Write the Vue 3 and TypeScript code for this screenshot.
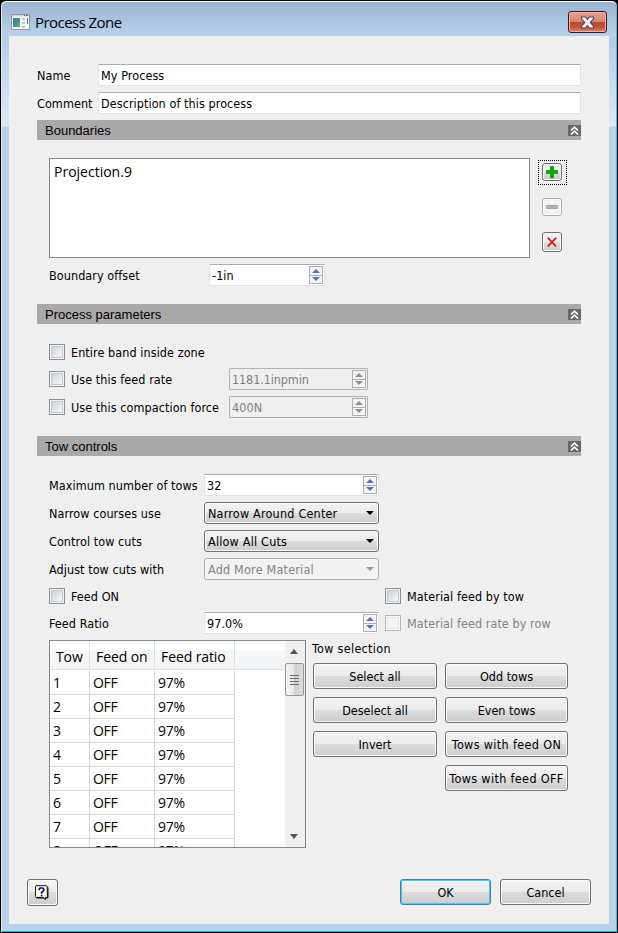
<script setup lang="ts">
import { ref } from 'vue'

const name = ref('My Process')
const comment = ref('Description of this process')
const boundaries = ['Projection.9']
const tows = [1, 2, 3, 4, 5, 6, 7, 8].map((id) => ({ id, feed: 'OFF', ratio: '97%' }))
const leftActions = ['Select all', 'Deselect all', 'Invert']
const rightActions = ['Odd tows', 'Even tows', 'Tows with feed ON', 'Tows with feed OFF']
</script>

<template>
  <div class="window">
    <header class="titlebar">
      <svg class="app-icon" width="19" height="17" viewBox="0 0 19 17">
        <defs>
          <linearGradient id="scr" x1="0" y1="0" x2="1" y2="1">
            <stop offset="0" stop-color="#4a7aa8" /><stop offset="0.5" stop-color="#3f8f86" /><stop offset="1" stop-color="#6db46c" />
          </linearGradient>
        </defs>
        <path d="M.5.5h18v15H.5z" fill="#f4f5f6" stroke="#8d98a3" />
        <path d="M1 1h17v1.500H1z" fill="#cfd4d9" />
        <path d="M13 1h1v1h-1zM15 1h2v1h-2z" fill="#59636d" />
        <path d="M2 4h7v9H2z" fill="url(#scr)" />
        <path d="M11 4h3v2h-3zM11 8h3v2h-3zM11 12h3v2h-3z" fill="#c3c6ca" />
        <path d="M16 4h1v6h-1z" fill="#4b8a83" />
      </svg>
      <span class="title">Process Zone</span>
      <button class="close" aria-label="Close">
        <svg width="15" height="13" viewBox="0 0 15 13">
          <path d="M1.500 1h4l2 2.400 2-2.400h4v1.800L10.200 6.500l3.300 3.700V12h-4l-2-2.400-2 2.400h-4v-1.800l3.300-3.700-3.300-3.700z" fill="#f4f4f6" stroke="#4b4557" stroke-width="1.100" />
        </svg>
      </button>
    </header>

    <main class="client">
      <div class="top-row"><label>Name</label><input v-model="name" class="field" /></div>
      <div class="top-row"><label>Comment</label><input v-model="comment" class="field" /></div>

      <section>
        <h2 class="bar"><span>Boundaries</span><svg class="chev" width="13" height="11" viewBox="0 0 13 11"><path d="M3 5.500l3.500-3.300L10 5.500M3 9.500l3.500-3.300L10 9.500" /></svg></h2>
        <div class="boundary">
          <ul class="list"><li v-for="b in boundaries" :key="b">{{ b }}</li></ul>
          <div class="tools">
            <div class="focus">
              <button class="btn tool" aria-label="Add">
                <svg width="12" height="12" viewBox="0 0 12 12"><path d="M4.500 0h3l.5.5V4h3.500l.5.5v3l-.5.5H8v3.500l-.5.5h-3l-.5-.5V8H.5L0 7.500v-3L.5 4H4V.5z" fill="#11a611" /></svg>
              </button>
            </div>
            <button class="btn tool off" aria-label="Remove">
              <svg width="12" height="4" viewBox="0 0 12 4"><rect width="12" height="4" rx="1" fill="#a5a5a5" /><path d="M1 2h10" stroke="#c5c5c5" /></svg>
            </button>
            <button class="btn tool del" aria-label="Delete">
              <svg width="10" height="10" viewBox="0 0 10 10"><path d="M.7.7L9 9.300M9.300.7L.7 9.300" stroke="#c51f24" stroke-width="1.700" fill="none" /></svg>
            </button>
          </div>
        </div>
        <div class="offset">
          <label>Boundary offset</label>
          <div class="spin"><span>-1in</span><i class="steps"><b class="up" /><b class="down" /></i></div>
        </div>
      </section>

      <section>
        <h2 class="bar"><span>Process parameters</span><svg class="chev" width="13" height="11" viewBox="0 0 13 11"><path d="M3 5.500l3.500-3.300L10 5.500M3 9.500l3.500-3.300L10 9.500" /></svg></h2>
        <div class="params">
          <div class="param first"><i class="check" /><label>Entire band inside zone</label></div>
          <div class="param"><i class="check" /><label>Use this feed rate</label><div class="spin disabled"><span class="t-inp">1181.1inpmin</span><i class="steps"><b class="up" /><b class="down" /></i></div></div>
          <div class="param"><i class="check" /><label>Use this compaction force</label><div class="spin disabled"><span>400N</span><i class="steps"><b class="up" /><b class="down" /></i></div></div>
        </div>
      </section>

      <section>
        <h2 class="bar"><span>Tow controls</span><svg class="chev" width="13" height="11" viewBox="0 0 13 11"><path d="M3 5.500l3.500-3.300L10 5.500M3 9.500l3.500-3.300L10 9.500" /></svg></h2>
        <div class="controls">
          <div class="ctl"><label>Maximum number of tows</label><div class="spin"><span>32</span><i class="steps"><b class="up" /><b class="down" /></i></div></div>
          <div class="ctl"><label>Narrow courses use</label><button class="btn combo"><span>Narrow Around Center</span><i class="arrow" /></button></div>
          <div class="ctl"><label>Control tow cuts</label><button class="btn combo"><span>Allow All Cuts</span><i class="arrow" /></button></div>
          <div class="ctl"><label>Adjust tow cuts with</label><button class="btn combo off"><span>Add More Material</span><i class="arrow" /></button></div>
          <div class="ctl feed"><i class="check" /><label>Feed ON</label><i class="check" /><label>Material feed by tow</label></div>
          <div class="ctl ratio"><label>Feed Ratio</label><div class="spin"><span>97.0%</span><i class="steps"><b class="up" /><b class="down" /></i></div><i class="check faint" /><label class="dim">Material feed rate by row</label></div>
        </div>
      </section>

      <section class="bottom">
        <div class="grid-box">
          <div class="grid">
            <div class="row head"><span>Tow</span><span>Feed on</span><span>Feed ratio</span><span class="rest" /></div>
            <div v-for="t in tows" :key="t.id" class="row"><span>{{ t.id }}</span><span>{{ t.feed }}</span><span>{{ t.ratio }}</span></div>
          </div>
          <div class="scroll">
            <i class="s-up" />
            <div class="thumb"><i /><i /><i /><i /></div>
            <i class="s-down" />
          </div>
        </div>
        <div class="selection">
          <label>Tow selection</label>
          <div class="cols">
            <div class="col"><button v-for="a in leftActions" :key="a" class="btn act">{{ a }}</button></div>
            <div class="col second"><button v-for="a in rightActions" :key="a" class="btn act" :class="{ long: a.length > 12 }">{{ a }}</button></div>
          </div>
        </div>
      </section>

      <footer class="footer">
        <button class="btn help" aria-label="Help">
          <svg width="14" height="16" viewBox="0 0 14 16">
            <path d="M2 1.500h10l1.500 1v10l-1.500 1h-1V15l-2-1.500H2l-1-1v-10z" fill="#111" />
            <path d="M1 .7h10.500l.8.8v10.200l-.8.800H10.300v1.800L8.300 12.500H1l-.5-.8V1.500z" fill="#fffff0" stroke="#111" />
            <path d="M2.500 2v10M10.500 2v10" stroke="#f3f08c" stroke-dasharray="1 1" />
            <path d="M4.200 5.200V4.100L5.100 3h2.600l1 1v1.700L6.600 7.500v1.200M6.600 9.800v1.700" fill="none" stroke="#101087" stroke-width="1.700" />
          </svg>
        </button>
        <button class="btn dlg ok">OK</button>
        <button class="btn dlg">Cancel</button>
      </footer>
    </main>
  </div>
</template>

<style>
body { margin: 0; background: #000; overflow: hidden; }
</style>

<style scoped>
* { box-sizing: border-box; }
.window {
  width: 618px; height: 933px; padding: 0 8px 7px;
  border: 1px solid #000; border-radius: 6px 6px 0 0;
  background:
    linear-gradient(#99b4d1, #b9d1ea 35px, #b9d1ea 36px, transparent 36px),
    linear-gradient(#b5cde8 36px, #dce8f5 125px, #b9d1ea 126px);
  box-shadow: inset 0 1px #fff, inset 1px 0 #e3ecf5, inset -1px 0 #24c3e8, inset 0 -1px #24b0cc;
  font: 12.5px/16px 'DejaVu Sans Condensed', 'DejaVu Sans', sans-serif; font-stretch: condensed; letter-spacing: .07px; color: #000;
}
button, input { font: inherit; font-stretch: inherit; color: inherit; letter-spacing: inherit; padding: 0; }
.titlebar { height: 35px; display: flex; align-items: flex-start; padding: 0 2px 0 2px; }
.app-icon { margin-top: 13px; }
.title { flex: 1; margin: 10px 0 0 5px; font: 15px/22px 'Open Sans', sans-serif; letter-spacing: -.55px; }
.close {
  width: 39px; height: 22px; margin-top: 10px; display: flex; align-items: center; justify-content: center;
  border: 1px solid #431422; border-radius: 3px; box-shadow: inset 0 0 0 1px #edb5a8;
  background: linear-gradient(#e6a294, #d68473 48%, #b9432c 50%, #c2553c 75%, #d88573);
}
.client { width: 600px; height: 888px; padding: 28px 28px 0; background: #efefef; }
label { padding-top: 1px; white-space: nowrap; }
.top-row { display: grid; grid-template-columns: 61px 483px; align-items: center; height: 22px; margin-bottom: 6px; }
.field, .spin { height: 22px; background: #fff; border: 1px solid #e2e3ea; border-top-color: #abadb3; border-radius: 1px; }
.field { width: 483px; padding: 1px 2px 0; outline: none; }
.bar { margin: 0; height: 20px; padding: 0 0 0 8px; background: #a9a9a9; display: flex; align-items: center; justify-content: space-between; font: 13px/19px 'Liberation Sans', sans-serif; letter-spacing: 0; }
.bar span { padding-top: 1px; }
.chev { background: #686868; margin-top: 1px; }
.chev path { fill: none; stroke: #fff; stroke-width: 1.6; }
.boundary { display: flex; height: 100px; margin: 18px 0 0 12px; }
.list { margin: 0; padding: 2px 4px; list-style: none; width: 481px; background: #fff; border: 1px solid #828790; font: 14px/22px 'Open Sans', sans-serif; letter-spacing: 0; }
.tools { display: flex; flex-direction: column; align-items: flex-start; width: 29px; margin: 2px 0 0 8px; }
.focus { width: 29px; height: 25px; padding: 2px 0 0 3px; border: 1px dotted #000; }
.btn {
  border: 1px solid #707070; border-radius: 3px; box-shadow: inset 0 0 0 1px #f9f9f9;
  background: linear-gradient(#f3f3f3, #ebebeb 49%, #dcdcdc 50%, #cdcdcd);
}
.btn.off { border-color: #adadad; background: #f2f2f2; color: #838383; }
.tool { width: 20px; height: 18px; display: flex; align-items: center; justify-content: center; flex: none; }
.tool.off { margin: 13px 0 0 4px; }
.tool.del { height: 20px; margin: 16px 0 0 4px; }
.offset { display: grid; grid-template-columns: 160px 116px; align-items: center; margin: 6px 0 18px 12px; }
.spin { display: flex; align-items: center; justify-content: space-between; padding: 0 1px 0 2px; }
.spin span { padding-top: 1px; }
.steps { width: 14px; height: 18px; display: flex; flex-direction: column; border: 1px solid #abadb3; background: #f4f4f4; }
.steps b { flex: 1; display: flex; align-items: center; justify-content: center; }
.steps b + b { border-top: 1px solid #abadb3; }
.steps b::after { content: ''; border: 4px solid transparent; border-top: 0; border-bottom: 4px solid #5a70b8; }
.steps .down::after { border-bottom: 0; border-top: 4px solid #5a70b8; }
.spin.disabled { background: #efefef; border-color: #b2b2b2; color: #7f7f7f; }
.t-inp { letter-spacing: -.1px; }
.spin.disabled .up::after { border-bottom-color: #8d8d8d; }
.spin.disabled .down::after { border-top-color: #8d8d8d; }
.params { padding: 17px 0 18px 12px; }
.param { display: grid; grid-template-columns: 22px 158px 139px; align-items: center; height: 22px; margin-bottom: 6px; }
.param.first { margin-bottom: 5px; }
.param:last-child { margin-bottom: 0; }
.check { display: block; width: 16px; height: 16px; border: 1px solid #8e8f8f; background: linear-gradient(135deg, #c3c8d0, #f6f6f6 80%); box-shadow: inset 0 0 0 1px #f4f4f4, inset 0 0 0 2px #c4c8cd; }
.check.faint { border-color: #b6b6b6; background: #f5f5f5; box-shadow: inset 0 0 0 1px #fbfbfb, inset 0 0 0 2px #e4e4e4; }
.dim { color: #838383; }
.controls { padding: 18px 0 0 12px; }
.ctl { display: grid; grid-template-columns: 155px 175px; align-items: center; height: 22px; margin-bottom: 6px; }
.combo { height: 22px; display: flex; align-items: center; justify-content: space-between; padding: 0 4px 0 3px; letter-spacing: .2px; }
.combo span { padding-top: 1px; }
.arrow { border: 4.500px solid transparent; border-top: 4.500px solid #000; border-bottom: 0; }
.off .arrow { border-top-color: #999; }
.ctl.feed { grid-template-columns: 22px 314px 22px auto; margin: -1px 0 5px; }
.ctl.feed label { padding-top: 2px; }
.ctl.ratio { grid-template-columns: 155px 175px 28px auto; margin-bottom: 6px; }
.ratio .check { margin-left: 6px; }
.bottom { display: flex; margin-left: 12px; }
.grid-box { width: 257px; height: 208px; display: flex; border: 1px solid #828790; background: #fff; }
.grid { flex: 1; overflow: hidden; font: 14px/23px 'Open Sans', sans-serif; letter-spacing: -.3px; }
.row { display: grid; grid-template-columns: 40px 65px 80px 50px; height: 24px; }
.row span { padding-left: 3px; border-right: 1px solid #d5d5d5; border-bottom: 1px solid #d5d5d5; }
.row.head { height: 29px; margin-bottom: 1px; line-height: 24px; background: linear-gradient(#fff 9px, #f7f8fa 9px, #f1f2f4); }
.row.head span { padding: 4px 0 0 6px; border-color: #dfe0e2; white-space: nowrap; letter-spacing: -.1px; }
.row.head .rest { border-right: 0; }
.scroll { width: 20px; display: flex; flex-direction: column; align-items: flex-start; background: #efefef; }
.s-up, .s-down { border: 4.500px solid transparent; border-top: 0; border-bottom: 5px solid #555; margin: 8px 0 0 5px; }
.s-down { border-bottom: 0; border-top: 5px solid #555; margin: auto 0 8px 5px; }
.thumb { width: 19px; height: 33px; margin-top: 9px; padding: 11px 0 0 4px; border: 1px solid #979797; border-radius: 2px; background: linear-gradient(90deg, #f4f4f4, #e7e7e9 48%, #d0d0d2 50%, #dddddf); }
.thumb i { display: block; width: 9px; height: 1px; margin-bottom: 2px; background: #686868; }
.selection { padding-left: 6px; }
.selection > label { display: block; padding: 0; line-height: 18px; height: 23px; letter-spacing: .3px; }
.cols { display: flex; gap: 8px; margin-left: 1px; }
.col { display: flex; flex-direction: column; gap: 8px; width: 124px; }
.col.second { width: 123px; }
.act { height: 26px; padding-top: 1px; white-space: nowrap; letter-spacing: 0; }
.long { letter-spacing: .35px; }
.footer { display: flex; margin: 31px -10px 0 -10px; align-items: flex-start; }
.help { width: 31px; height: 27px; margin-right: auto; padding-right: 1px; display: flex; align-items: center; justify-content: center; }
.dlg { width: 91px; height: 26px; padding-top: 1px; margin-left: 9px; letter-spacing: 0; }
.ok { border-color: #3c7fb1; box-shadow: inset 0 0 0 1px #48cdf2; }
</style>
